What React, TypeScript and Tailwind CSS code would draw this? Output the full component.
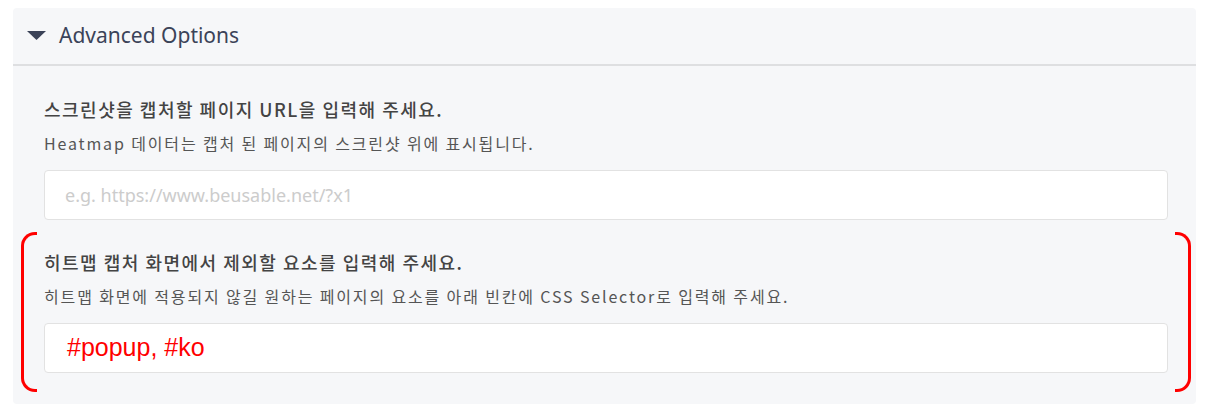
const font = "font-['Noto_Sans_CJK_KR','Noto_Sans',sans-serif]";

function Field({
  label,
  help,
  placeholder,
  value,
}: {
  label: string;
  help: string;
  placeholder?: string;
  value?: string;
}) {
  return (
    <div className="flex flex-col">
      <div className="text-[18px] leading-[24px] font-medium text-[#444] tracking-[1.5px]">{label}</div>
      <div className="mt-[11px] text-[16px] leading-[22px] text-[#555] tracking-[1.85px]">{help}</div>
      <div className="mt-[16px] h-[50px] rounded-[4px] border border-[#e2e2e2] bg-white flex items-center px-[20px]">
        {value ? (
          <span className="text-[25px] text-[#f00] font-['Liberation_Sans',sans-serif] pl-[2px]">{value}</span>
        ) : (
          <span className="text-[18px] text-[#cccccc] font-['Noto_Sans',sans-serif]">{placeholder}</span>
        )}
      </div>
    </div>
  );
}

export default function App() {
  return (
    <div className={`w-[1214px] h-[411px] bg-white pt-[8px] pl-[13px] ${font}`}>
      <div className="w-[1183px] h-[396px] rounded-[4px] bg-[#f6f7f9]">
        <div className="h-[58px] flex items-center pl-[14px] border-b-2 border-[#dedfe1]">
          <svg width="19" height="10" viewBox="0 0 19 10" className="mr-[13px]">
            <path d="M0 0 H19 L9.5 9 Z" fill="#3b4358" />
          </svg>
          <span className="text-[21px] text-[#3b4358] font-['Noto_Sans',sans-serif]">Advanced Options</span>
        </div>
        <div className="pl-[31px] pr-[28px] pt-[31px]">
          <Field
            label="스크린샷을 캡처할 페이지 URL을 입력해 주세요."
            help="Heatmap 데이터는 캡처 된 페이지의 스크린샷 위에 표시됩니다."
            placeholder="e.g. https://www.beusable.net/?x1"
          />
          <div className="relative mt-[30px] pb-[19px]">
            <div className="absolute left-[-23px] top-[-18px] bottom-0 w-[16px] border-l-[3px] border-t-[3px] border-b-[3px] border-[#f00] rounded-l-[14px]" />
            <div className="absolute right-[-23px] top-[-18px] bottom-0 w-[16px] border-r-[3px] border-t-[3px] border-b-[3px] border-[#f00] rounded-r-[14px]" />
            <Field
              label="히트맵 캡처 화면에서 제외할 요소를 입력해 주세요."
              help="히트맵 화면에 적용되지 않길 원하는 페이지의 요소를 아래 빈칸에 CSS Selector로 입력해 주세요."
              value="#popup, #ko"
            />
          </div>
        </div>
      </div>
    </div>
  );
}
